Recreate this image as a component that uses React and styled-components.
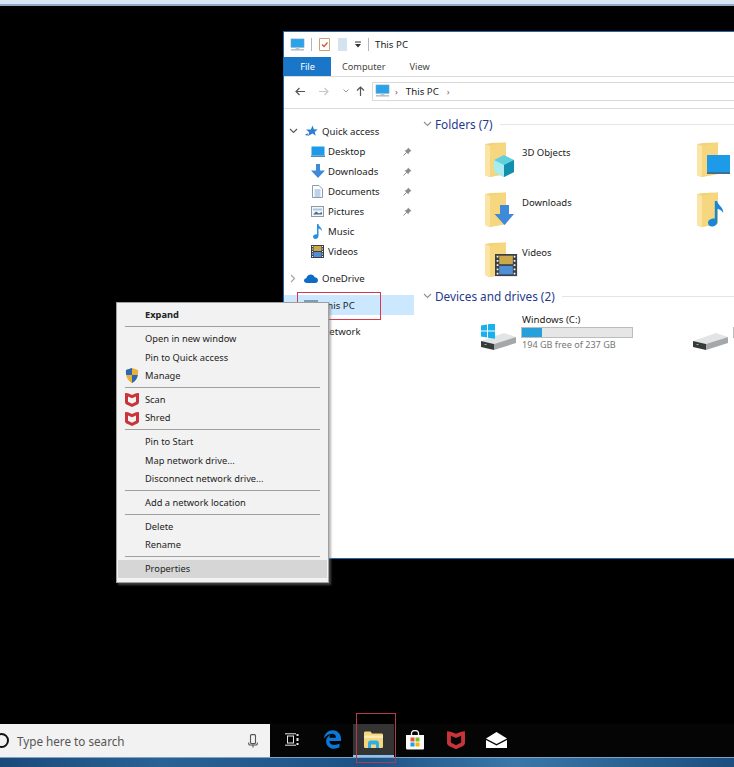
import React from "react";
import styled, { createGlobalStyle } from "styled-components";
import { FaEdgeLegacy } from "react-icons/fa";

const Global = createGlobalStyle`
  html, body { margin: 0; padding: 0; background: #000; }
  * { box-sizing: border-box; }
`;
const Screen = styled.div`
  width: 734px; height: 767px; overflow: hidden; display: flex; flex-direction: column;
  background: #000; font-family: "Noto Sans", "Open Sans", sans-serif; color: #222;
`;
const TopStrip = styled.div`
  height: 6px; flex: none; background: #d8e5f3; border-bottom: 2px solid #8fa9c4;
`;
const Desktop = styled.div`
  position: relative; flex: 1; min-height: 0; background: #000;
`;
const Taskbar = styled.div`
  height: 33px; flex: none; display: flex; background: #050505;
`;
const Wallpaper = styled.div`
  height: 10px; flex: none; border-top: 1px solid #7da4c8;
  background: linear-gradient(90deg, #1a4a7a 0%, #2a6296 22%, #1d5285 50%, #3a77a8 70%, #1c4e80 100%);
`;
const Explorer = styled.div`
  position: absolute; left: 283px; top: 25px; width: 470px; height: 528px; background: #fff;
  border: 1px solid #1b6aa8; border-right: 0; display: flex; flex-direction: column; overflow: hidden;
`;
const TitleBar = styled.div`
  height: 25px; flex: none; display: flex; align-items: center; padding-left: 6px; font-size: 9.7px; color: #222;
`;
const TitleDivider = styled.span`
  width: 1px; height: 13px; background: #b5b5b5; margin: 0 ${p => p.$left}px 0 ${p => p.$gapLeft}px;
`;
const QuickIcon = styled.span`
  display: flex; margin-right: ${p => p.$right || 0}px;
`;
const Ribbon = styled.div`
  height: 20px; flex: none; display: flex; align-items: stretch; border-bottom: 1px solid #dadbdc; font-size: 9.2px; color: #444;
`;
const FileTab = styled.div`
  width: 47px; background: #1a76c9; color: #fff; display: flex; align-items: center; justify-content: center;
`;
const RibbonTab = styled.div`
  display: flex; align-items: center; margin-left: ${p => p.$left}px;
`;
const AddressRow = styled.div`
  height: 32px; flex: none; display: flex; align-items: center; border-bottom: 1px solid #dcdcdc; padding: 0 0 3px 10px;
`;
const NavArrow = styled.span`
  display: flex; width: ${p => p.$w}px; flex: none; justify-content: center;
`;
const AddressBox = styled.div`
  flex: 1; height: 19px; margin-left: 2px; border: 1px solid #d9d9d9; border-right: 0;
  display: flex; align-items: center; padding-left: 2px; font-size: 9.7px; color: #222;
`;
const Crumb = styled.span`
  color: #666; font-size: 9px; margin: 0 ${p => p.$right || 0}px 0 ${p => p.$left || 0}px;
`;
const Body = styled.div`
  flex: 1; display: flex; min-height: 0;
`;
const NavPane = styled.div`
  width: 130px; flex: none; padding-top: 12px; display: flex; flex-direction: column;
`;
const NavRow = styled.div`
  height: 20px; flex: none; display: flex; align-items: center; font-size: 9.6px; color: #222;
  padding-left: ${p => p.$indent}px; margin-top: ${p => p.$top || 0}px;
  background: ${p => (p.$selected ? "#cce8ff" : "transparent")};
`;
const Chevron = styled.span`
  display: flex; width: 20px; flex: none; justify-content: center; padding-right: 2px;
`;
const NavGlyph = styled.span`
  display: flex; width: ${p => p.$w || 17}px; flex: none; justify-content: center; margin-right: ${p => p.$right || 0}px;
`;
const NavLabel = styled.span`
  flex: 1; white-space: nowrap;
`;
const Pin = styled.span`
  display: flex; width: 9px; margin-right: 2px;
`;
const Content = styled.div`
  flex: 1; min-width: 0; display: flex; flex-direction: column; padding-top: 6px;
`;
const GroupHead = styled.div`
  height: 18px; flex: none; display: flex; align-items: center; padding-left: 9px; color: #1f3a8f; font-size: 11.8px;
`;
const GroupTitle = styled.span`
  margin-left: 3px; white-space: nowrap;
`;
const GroupRule = styled.span`
  flex: 1; height: 1px; background: #e5e5e5; margin-left: 7px;
`;
const FolderGrid = styled.div`
  height: 147px; flex: none; margin-top: 7px; padding-left: 71px; display: grid;
  grid-template-columns: 212px 212px; grid-auto-rows: 50px;
`;
const Tile = styled.div`
  display: flex; font-size: 9.5px; color: #222;
`;
const TileIcon = styled.span`
  width: 37px; flex: none; display: flex;
`;
const TileLabel = styled.span`
  padding-top: 6px; white-space: nowrap;
`;
const DriveGrid = styled.div`
  margin-top: 7px; padding-left: 66px; display: grid; grid-template-columns: 212px 212px;
`;
const Drive = styled.div`
  display: flex;
`;
const DriveIcon = styled.span`
  width: 41px; flex: none; display: flex; padding-top: 12px;
`;
const DriveInfo = styled.div`
  display: flex; flex-direction: column; font-size: 9.7px; color: #222; line-height: 14px; padding: 1px 0 0 1px;
`;
const DriveBar = styled.div`
  width: 112px; height: 11px; margin-left: -1px; background: #e6e6e6; border: 1px solid #bcbcbc;
`;
const DriveFill = styled.div`
  height: 100%; background: #26a0da;
`;
const DriveFree = styled.span`
  color: #777; font-size: 9.1px; white-space: nowrap;
`;
const Menu = styled.div`
  position: absolute; left: 116px; top: 296px; width: 213px; height: 281px; background: #f2f2f2;
  border: 1px solid #a0a0a0; padding: 2.5px 1px; display: flex; flex-direction: column;
  box-shadow: 2px 2px 2px rgba(120,120,120,.55);
`;
const MenuItem = styled.div`
  height: 18.4px; flex: none; display: flex; align-items: center; padding-left: 27px; position: relative;
  font-size: 9.3px; color: #222; font-weight: ${p => (p.$bold ? 700 : 400)};
  background: ${p => (p.$active ? "#d6d6d6" : "transparent")};
`;
const MenuIcon = styled.span`
  position: absolute; left: 7px; top: 2px; display: flex;
`;
const MenuSep = styled.div`
  height: 5.6px; flex: none; display: flex; align-items: center; padding: 0 7px 0 7px;
  &::after { content: ""; flex: 1; height: 1px; background: #a0a0a0; }
`;
const Callout = styled.div`
  position: absolute; border: 1px solid ${p => p.$color || "#d8394a"}; pointer-events: none;
  left: ${p => p.$x}px; top: ${p => p.$y}px; width: ${p => p.$w}px; height: ${p => p.$h}px;
`;
const SearchBox = styled.div`
  width: 270px; flex: none; background: #f2f2f2; display: flex; align-items: center; font-size: 11.7px; color: #555;
`;
const CortanaRing = styled.span`
  width: 15px; height: 15px; border: 2px solid #111; border-radius: 50%; margin-left: -6px; margin-right: 8px; flex: none;
`;
const SearchText = styled.span`
  flex: 1; white-space: nowrap;
`;
const MicSlot = styled.span`
  display: flex; margin-right: 12px;
`;
const TaskButtons = styled.div`
  display: flex; margin-left: 1px;
`;
const TaskButton = styled.div`
  width: 41px; height: 33px; display: flex; align-items: center; justify-content: center;
  background: ${p => (p.$active ? "#343434" : "transparent")};
  border-bottom: 2px solid ${p => (p.$active ? "#8fc3ea" : "transparent")};
`;

const PcIcon = ({ s = 15 }) => (
  <svg width={s} height={s * 0.87} viewBox="0 0 16 14">
    <rect x="1" y="1" width="14" height="9" fill="#2ba3ea" stroke="#7fa6c2" strokeWidth=".6" />
    <rect x="6" y="10" width="4" height="2" fill="#b7c6d2" />
    <rect x="1" y="12" width="14" height="1.4" fill="#a9b4bd" />
  </svg>
);
const Shape = ({ w, h, vb, children }) => (
  <svg width={w} height={h} viewBox={vb || `0 0 ${w} ${h}`}>{children}</svg>
);
const ChevDown = ({ c = "#555" }) => <Shape w={9} h={6}><path d="M1 1l3.5 3.5L8 1" fill="none" stroke={c} strokeWidth="1.1" /></Shape>;
const ChevRight = () => <Shape w={6} h={9}><path d="M1 1l3.5 3.5L1 8" fill="none" stroke="#a6a6a6" strokeWidth="1.2" /></Shape>;
const PinGlyph = () => (
  <Shape w={9} h={9}>
    <path d="M5 .5L8.500 4 7 4.500 5.500 6.500V7.500L1.500 3.500H2.500L4.500 2z" fill="#8b8b8b" />
    <path d="M3.500 5.500L.5 8.500" stroke="#8b8b8b" />
  </Shape>
);
const StarIcon = () => (
  <Shape w={13} h={13}><path d="M7.5.5l1.4 3.8 3.8.2-3 2.4 1 3.8-3.2-2.1L3 11l1.2-3.7L1 4.6l4.9-.2z" fill="#2f7fd1" /><path d="M0 9.5l3-1.2-.6 2.6z" fill="#2f7fd1" /></Shape>
);
const DesktopIcon = () => (
  <Shape w={14} h={11}><rect x=".5" y=".5" width="13" height="9" fill="#1d9be8" /><rect y="9.5" width="14" height="1.5" fill="#5b8bb0" /></Shape>
);
const DownIcon = () => (
  <Shape w={14} h={14}><path d="M5 0h4v6.5h5L7 14 0 6.5h5z" fill="#3f8ad8" /></Shape>
);
const DocIcon = () => (
  <Shape w={11} h={13}><path d="M.5.5h6.5L10.5 4v8.5H.5z" fill="#fff" stroke="#8a9cb0" /><path d="M2.5 5h6M2.5 7h6M2.5 9h6M2.5 11h6" stroke="#5f8fc4" strokeWidth=".8" /></Shape>
);
const PicIcon = () => (
  <Shape w={13} h={11}><rect x=".5" y=".5" width="12" height="10" fill="#f4f7fa" stroke="#8f9aa4" /><path d="M2 8.5l3-3 3 2 3-1.5v2.5z" fill="#4d6b8a" /><rect x="2" y="2.5" width="9" height="2" fill="#a9c8e6" /></Shape>
);
const NoteIcon = ({ w = 10, h = 15, c = "#2b8fe0" }) => (
  <svg width={w} height={h} viewBox="0 0 10 15"><path d="M4 0h1.4c.3 2.6 3.6 3.4 3.6 7-1-1.500-2.300-2.200-3.500-2.400V12c0 1.800-1.500 3-3.200 3C1 15 0 14 0 12.800 0 11.300 1.600 10.200 4 10.300z" fill={c} /></svg>
);
const FilmIcon = ({ s = 13 }) => (
  <svg width={s} height={s} viewBox="0 0 13 13">
    <rect width="13" height="13" fill="#3c3f46" />
    <rect x="2.500" y="1" width="8" height="5" fill="#c9a94a" />
    <rect x="2.500" y="7" width="8" height="5" fill="#4f8fd6" />
    <path d="M1 1.500h1M1 4h1M1 6.500h1M1 9h1M1 11.500h1M11 1.500h1M11 4h1M11 6.500h1M11 9h1M11 11.500h1" stroke="#fff" strokeWidth="1" />
  </svg>
);
const Cloud = () => (
  <Shape w={14} h={9}><path d="M3 9C1 9 0 7.800 0 6.500S1 4.200 2.300 4.200C3 1.800 4.800.5 6.800.5c1.800 0 3.200 1 3.900 2.700 1.800 0 3.300 1.400 3.300 3S12.800 9 11.500 9z" fill="#0f6cc4" /></Shape>
);
const Folder = ({ children }) => (
  <svg width="36" height="40" viewBox="0 0 36 40">
    <path d="M0 4l6-1 15-.500V34L4 37l-4-2z" fill="#f3d27a" />
    <path d="M0 4l5 2v31l-5-2z" fill="#fbe5a6" />
    <path d="M5 6l16-3.500V34L5 37z" fill="#f6d77f" />
    {children}
  </svg>
);
const BigDrive = ({ win }) => (
  <svg width="37" height="27" viewBox="0 0 37 27">
    <path d="M1 17L24 9l12 4-22 7z" fill="#e3e4e5" />
    <path d="M1 17l13 3v6L1 23z" fill="#37393a" />
    <path d="M14 20l22-7v6l-22 7z" fill="#a5a8aa" />
    <rect x="4.500" y="20" width="2" height="1" fill="#6fd36f" />
    {win && <g fill="#17b2ee"><path d="M1 1.500l6-1v6H1zM8 .3l7-1V6.500H8zM1 7.500h6v6l-6-1zM8 7.500h7v7.200l-7-1z" /></g>}
  </svg>
);
const Shield = () => (
  <Shape w={14} h={15}>
    <path d="M7 0l6 2c.4 5-.6 10.500-6 13C1.600 12.500.6 7 1 2z" fill="#e6b23a" />
    <path d="M7 0v7H1.200C.9 5.600.9 3.700 1 2z" fill="#2b67b5" />
    <path d="M7 7h5.800C12.200 10.500 10.400 13.400 7 15z" fill="#2b67b5" />
  </Shape>
);
const McAfee = ({ s = 14, bg = "#f2f2f2" }) => (
  <svg width={s} height={s * 1.07} viewBox="0 0 14 15">
    <path d="M7 15L1.500 12.500C.5 12 0 11 0 10V1l3 .3L7 3l4-1.700L14 1v9c0 1-.5 2-1.500 2.500z" fill="#c8343a" />
    <path d="M3 4.500L7 6.300 11 4.500v5.200L7 11.800 3 9.700z" fill={bg} />
  </svg>
);
const FolderTask = () => (
  <svg width="19" height="17" viewBox="0 0 19 17">
    <path d="M0 2c0-1 .5-1.500 1.500-1.500h5L8 2.500h9.500c1 0 1.500.5 1.500 1.500v11.500c0 1-.5 1.500-1.500 1.500h-16C.5 17 0 16.500 0 15.500z" fill="#f6d67c" />
    <path d="M0 4.500h19V7H0z" fill="#fbeab8" />
    <path d="M4 17v-4.500C4 10.500 5 9.500 6.500 9.500h6c1.500 0 2.500 1 2.500 3V17h-3v-3.500H7V17z" fill="#2eaee6" />
  </svg>
);
const StoreIcon = () => (
  <svg width="20" height="20" viewBox="0 0 20 20">
    <path d="M6.500 5V3.500C6.500 1.500 8 .5 10 .5s3.500 1 3.500 3V5" fill="none" stroke="#f4f4f4" strokeWidth="1.300" />
    <path d="M1 5h18v13c0 1-.5 1.500-1.500 1.500h-15C1.500 19.500 1 19 1 18z" fill="#fafafa" />
    <rect x="5.500" y="7.500" width="4" height="4" fill="#e8552f" />
    <rect x="10.500" y="7.500" width="4" height="4" fill="#7fba2a" />
    <rect x="5.500" y="12.500" width="4" height="4" fill="#1f9fe6" />
    <rect x="10.500" y="12.500" width="4" height="4" fill="#f5b800" />
  </svg>
);
const MailIcon = () => (
  <svg width="21" height="16" viewBox="0 0 21 16">
    <path d="M0 6.500L10.500 0 21 6.500 10.500 12z" fill="#fff" />
    <path d="M0 8l10.500 5.500L21 8v8H0z" fill="#fff" />
  </svg>
);
const TaskViewIcon = () => (
  <svg width="14" height="13" viewBox="0 0 14 13" fill="none" stroke="#e8e8e8">
    <rect x="2.500" y="3" width="6" height="7" />
    <path d="M0 .8h11M0 12.200h11" />
    <path d="M12.500 1v2M12.500 5v3M12.500 10v2" strokeWidth="2" />
  </svg>
);
const MicIcon = () => (
  <svg width="10" height="14" viewBox="0 0 10 14" fill="none" stroke="#555" strokeWidth="1.100">
    <rect x="2.500" y=".6" width="5" height="9" rx="1" />
    <path d="M.7 8.500v1.200c0 .8.600 1.300 1.300 1.300h6c.7 0 1.300-.5 1.300-1.300V8.500M5 11v2.500" />
  </svg>
);
const CheckDoc = () => (
  <Shape w={11} h={13}><path d="M.5.500h10v12H.5z" fill="#fff" stroke="#cda27b" /><path d="M3 6.500l2 2 3.500-4" fill="none" stroke="#d8503a" strokeWidth="1.200" /></Shape>
);
const BlankDoc = () => <Shape w={9} h={13}><rect width="9" height="13" fill="#d5e2ef" /></Shape>;
const SmallDown = () => (
  <Shape w={6} h={7}><path d="M0 1h6" stroke="#333" /><path d="M0 3h6L3 6.500z" fill="#333" /></Shape>
);
const ArrowLeft = ({ c }) => (
  <Shape w={10} h={9}><path d="M4.500 1L1 4.500 4.500 8M1 4.500h9" fill="none" stroke={c} strokeWidth="1.200" /></Shape>
);
const ArrowRight = ({ c }) => (
  <Shape w={10} h={9}><path d="M5.500 1L9 4.500 5.500 8M9 4.500H0" fill="none" stroke={c} strokeWidth="1.200" /></Shape>
);
const ArrowUp = () => (
  <Shape w={9} h={10}><path d="M1 4.500L4.500 1 8 4.500M4.500 1v9" fill="none" stroke="#555" strokeWidth="1.200" /></Shape>
);
const Caret = () => <Shape w={6} h={4}><path d="M.5.500L3 3l2.500-2.500" fill="none" stroke="#999" /></Shape>;
const PcNavIcon = () => <Shape w={14} h={11}><rect width="14" height="9" fill="#7f9db8" /><rect y="9.500" width="14" height="1.500" fill="#9aa6b0" /></Shape>;

const quick = [
  ["Desktop", <DesktopIcon />, true],
  ["Downloads", <DownIcon />, true],
  ["Documents", <DocIcon />, true],
  ["Pictures", <PicIcon />, true],
  ["Music", <NoteIcon />, false],
  ["Videos", <FilmIcon />, false],
];

const folders = [
  { id: "3d", label: "3D Objects", art: <g><path d="M9 20l10-5 10 5v12l-10 5-10-5z" fill="#5fd0dc" /><path d="M19 25l10-5v12l-10 5z" fill="#128fae" /><path d="M9 20l10 5v12L9 32z" fill="#a9ecef" /></g> },
  { id: "desktop", art: <g><rect x="10" y="15" width="23" height="17" fill="#1d9be8" /><rect x="10" y="32" width="23" height="2" fill="#3f6f96" /></g> },
  { id: "downloads", label: "Downloads", art: <path d="M15 15h9v9h5L19.500 35 9.500 24H15z" fill="#3f8ad8" /> },
  { id: "music", art: <g transform="translate(11 11) scale(1.700)"><path d="M4 0h1.400c.3 2.600 3.600 3.400 3.600 7-1-1.500-2.300-2.200-3.500-2.400V12c0 1.800-1.500 3-3.200 3C1 15 0 14 0 12.800 0 11.300 1.600 10.200 4 10.300z" fill="#1a86d8" /></g> },
  { id: "videos", label: "Videos", art: <g transform="translate(10 14) scale(1.700)"><rect width="13" height="13" fill="#3c3f46" /><rect x="2.500" y="1" width="8" height="5" fill="#c9a94a" /><rect x="2.500" y="7" width="8" height="5" fill="#4f8fd6" /><path d="M1 1.500h1M1 4h1M1 6.500h1M1 9h1M1 11.500h1M11 1.500h1M11 4h1M11 6.500h1M11 9h1M11 11.500h1" stroke="#fff" /></g> },
];

const menu = [
  { t: "Expand", bold: true }, "-",
  { t: "Open in new window" }, { t: "Pin to Quick access" }, { t: "Manage", icon: <Shield /> }, "-",
  { t: "Scan", icon: <McAfee /> }, { t: "Shred", icon: <McAfee /> }, "-",
  { t: "Pin to Start" }, { t: "Map network drive..." }, { t: "Disconnect network drive..." }, "-",
  { t: "Add a network location" }, "-",
  { t: "Delete" }, { t: "Rename" }, "-",
  { t: "Properties", active: true },
];

export default function App() {
  return (
    <Screen>
      <Global />
      <TopStrip />
      <Desktop>
        <Explorer>
          <TitleBar>
            <QuickIcon><PcIcon /></QuickIcon>
            <TitleDivider $gapLeft={6} $left={7} />
            <QuickIcon $right={8}><CheckDoc /></QuickIcon>
            <QuickIcon $right={8}><BlankDoc /></QuickIcon>
            <QuickIcon><SmallDown /></QuickIcon>
            <TitleDivider $gapLeft={7} $left={6} />
            <span>This PC</span>
          </TitleBar>
          <Ribbon>
            <FileTab>File</FileTab>
            <RibbonTab $left={11}>Computer</RibbonTab>
            <RibbonTab $left={24}>View</RibbonTab>
          </Ribbon>
          <AddressRow>
            <NavArrow $w={12}><ArrowLeft c="#555" /></NavArrow>
            <NavArrow $w={36}><ArrowRight c="#c8c8c8" /></NavArrow>
            <NavArrow $w={8}><Caret /></NavArrow>
            <NavArrow $w={20}><ArrowUp /></NavArrow>
            <AddressBox>
              <PcIcon />
              <Crumb $left={5} $right={8}>›</Crumb>
              This PC
              <Crumb $left={8}>›</Crumb>
            </AddressBox>
          </AddressRow>
          <Body>
            <NavPane>
              <NavRow $indent={0}>
                <Chevron><ChevDown /></Chevron>
                <NavGlyph $w={14} $right={4}><StarIcon /></NavGlyph>
                <NavLabel>Quick access</NavLabel>
              </NavRow>
              {quick.map(([label, icon, pinned]) => (
                <NavRow key={label} $indent={25}>
                  <NavGlyph $right={2}>{icon}</NavGlyph>
                  <NavLabel>{label}</NavLabel>
                  {pinned && <Pin><PinGlyph /></Pin>}
                </NavRow>
              ))}
              <NavRow $indent={0} $top={7}>
                <Chevron><ChevRight /></Chevron>
                <NavGlyph $w={14} $right={4}><Cloud /></NavGlyph>
                <NavLabel>OneDrive</NavLabel>
              </NavRow>
              <NavRow $indent={20} $top={7} $selected>
                <NavGlyph $w={14} $right={4}><PcNavIcon /></NavGlyph>
                <NavLabel>This PC</NavLabel>
              </NavRow>
              <NavRow $indent={38} $top={6}>
                <NavLabel>Network</NavLabel>
              </NavRow>
            </NavPane>
            <Content>
              <GroupHead>
                <ChevDown c="#8b8f9c" />
                <GroupTitle>Folders (7)</GroupTitle>
                <GroupRule />
              </GroupHead>
              <FolderGrid>
                {folders.map(({ id, label, art }) => (
                  <Tile key={id}>
                    <TileIcon><Folder>{art}</Folder></TileIcon>
                    {label && <TileLabel>{label}</TileLabel>}
                  </Tile>
                ))}
              </FolderGrid>
              <GroupHead>
                <ChevDown c="#8b8f9c" />
                <GroupTitle>Devices and drives (2)</GroupTitle>
                <GroupRule />
              </GroupHead>
              <DriveGrid>
                <Drive>
                  <DriveIcon><BigDrive win /></DriveIcon>
                  <DriveInfo>
                    <span>Windows (C:)</span>
                    <DriveBar><DriveFill style={{ width: `${((237 - 194) / 237) * 100}%` }} /></DriveBar>
                    <DriveFree>194 GB free of 237 GB</DriveFree>
                  </DriveInfo>
                </Drive>
                <Drive>
                  <DriveIcon><BigDrive /></DriveIcon>
                  <DriveInfo>
                    <span>&nbsp;</span>
                    <DriveBar />
                  </DriveInfo>
                </Drive>
              </DriveGrid>
            </Content>
          </Body>
        </Explorer>
        <Callout $x={297} $y={286} $w={84} $h={28} />
        <Callout $x={356} $y={707} $w={40} $h={50} $color="#b5394f" />
        <Menu>
          {menu.map((m, i) =>
            m === "-" ? <MenuSep key={i} /> : (
              <MenuItem key={m.t} $bold={m.bold} $active={m.active}>
                {m.icon && <MenuIcon>{m.icon}</MenuIcon>}
                {m.t}
              </MenuItem>
            )
          )}
        </Menu>
      </Desktop>
      <Taskbar>
        <SearchBox>
          <CortanaRing />
          <SearchText>Type here to search</SearchText>
          <MicSlot><MicIcon /></MicSlot>
        </SearchBox>
        <TaskButtons>
          <TaskButton><TaskViewIcon /></TaskButton>
          <TaskButton><FaEdgeLegacy size={19} color="#0a78d7" /></TaskButton>
          <TaskButton $active><FolderTask /></TaskButton>
          <TaskButton><StoreIcon /></TaskButton>
          <TaskButton><McAfee s={18} bg="#050505" /></TaskButton>
          <TaskButton><MailIcon /></TaskButton>
        </TaskButtons>
      </Taskbar>
      <Wallpaper />
    </Screen>
  );
}
